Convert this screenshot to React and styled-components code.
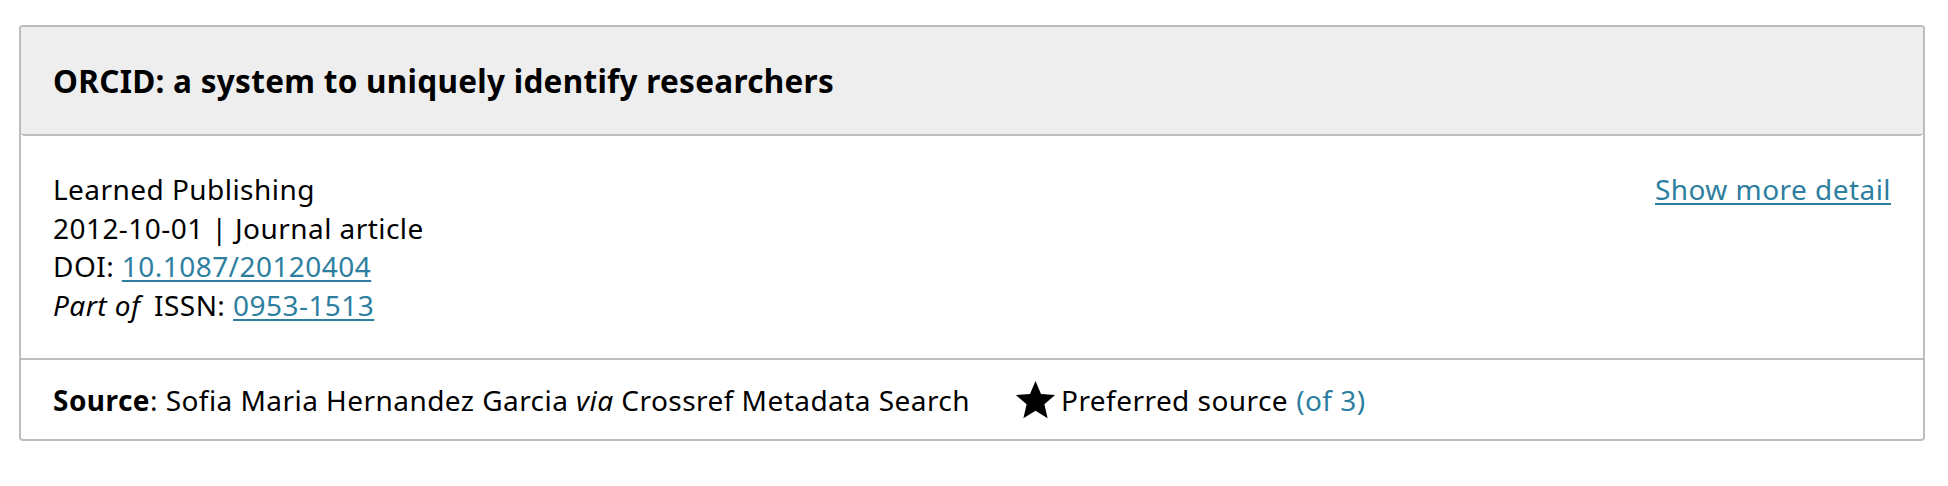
import React from "react";
import styled, { createGlobalStyle } from "styled-components";

const Global = createGlobalStyle`
  html, body { margin: 0; padding: 0; background: #ffffff; }
  body { font-family: "Noto Sans", "Open Sans", sans-serif; color: #000; }
`;

const Page = styled.div`
  padding: 25px 23px 0 19px;
`;

const Card = styled.section`
  border: 2px solid #bdbdbd;
  border-radius: 4px;
  background: #fff;
  overflow: hidden;
`;

const Header = styled.header`
  background: #eeeeee;
  border-bottom: 2px solid #bdbdbd;
  border-radius: 0 0 4px 4px;
  padding: 32px 32px 31px;
`;

const Title = styled.h3`
  margin: 0;
  font-size: 31.5px;
  line-height: 44px;
  font-weight: 700;
  letter-spacing: 0.28px;
`;

const Body = styled.div`
  display: flex;
  justify-content: space-between;
  align-items: flex-start;
  padding: 34px 32px 34px;
  border-bottom: 2px solid #bdbdbd;
`;

const Details = styled.div`
  display: flex;
  flex-direction: column;
`;

const Line = styled.div`
  font-size: 28px;
  line-height: 38.5px;
  letter-spacing: 0.45px;
`;

const Link = styled.a`
  color: #2e7f9f;
  text-decoration: underline;
  text-decoration-thickness: 2px;
  text-underline-offset: 3px;
  cursor: pointer;
`;

const Em = styled.i`
  margin-right: ${(p) => p.$gap || 0}px;
`;

const Footer = styled.footer`
  display: flex;
  align-items: center;
  padding: 17px 32px 15px;
  font-size: 28px;
  line-height: 38.5px;
  letter-spacing: 0.45px;
`;

const Preferred = styled.span`
  display: inline-flex;
  align-items: center;
  margin-left: 42px;
  gap: 2px;
`;

const Count = styled.span`
  color: #2e7f9f;
  margin-left: 8px;
`;

const Star = () => (
  <svg width="47" height="47" viewBox="0 0 24 24" aria-hidden="true">
    <path
      fill="#000"
      d="M12 17.27L18.18 21l-1.64-7.03L22 9.24l-7.19-.61L12 2 9.19 8.63 2 9.24l5.46 4.73L5.82 21z"
    />
  </svg>
);

export default function App() {
  return (
    <>
      <Global />
      <Page>
        <Card>
          <Header>
            <Title>ORCID: a system to uniquely identify researchers</Title>
          </Header>
          <Body>
            <Details>
              <Line>Learned Publishing</Line>
              <Line>2012-10-01 | Journal article</Line>
              <Line>
                DOI: <Link>10.1087/20120404</Link>
              </Line>
              <Line>
                <Em $gap={6}>Part of</Em> ISSN: <Link>0953-1513</Link>
              </Line>
            </Details>
            <Line>
              <Link>Show more detail</Link>
            </Line>
          </Body>
          <Footer>
            <span>
              <b>Source</b>: Sofia Maria Hernandez Garcia <i>via</i> Crossref
              Metadata Search
            </span>
            <Preferred>
              <Star />
              <span>
                Preferred source<Count>(of 3)</Count>
              </span>
            </Preferred>
          </Footer>
        </Card>
      </Page>
    </>
  );
}
